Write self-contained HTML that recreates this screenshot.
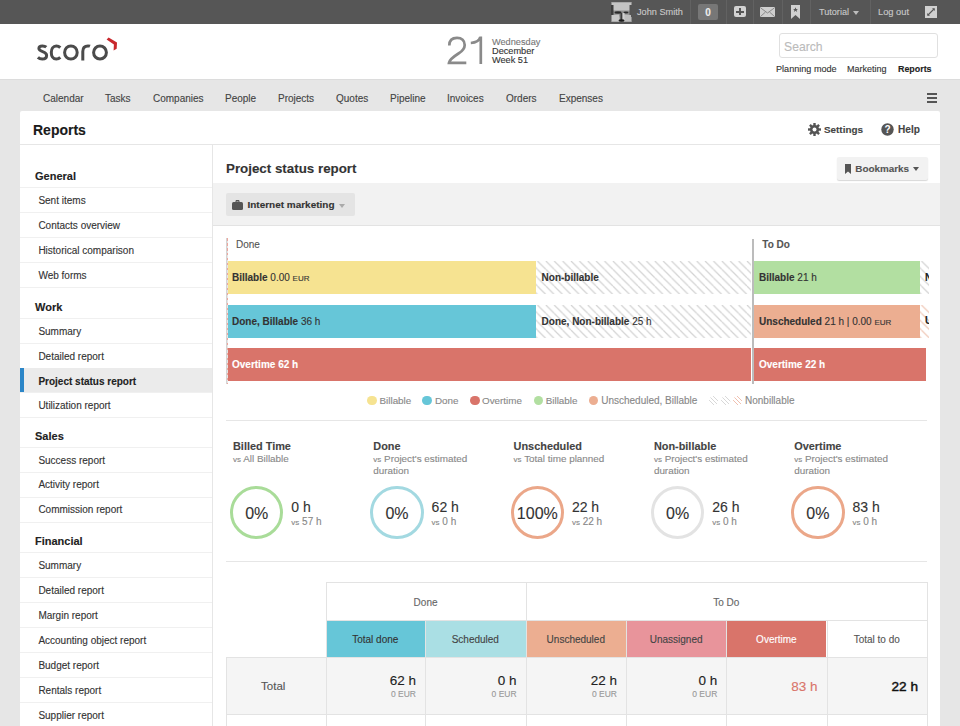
<!DOCTYPE html>
<html><head><meta charset="utf-8">
<style>
*{margin:0;padding:0;box-sizing:border-box}
html,body{width:960px;height:726px;overflow:hidden}
body{background:#e6e6e6;font-family:"Liberation Sans",sans-serif;position:relative;color:#333}
.a{position:absolute}
.t{position:absolute;line-height:1;white-space:nowrap;-webkit-text-stroke:0.12px currentColor}
.b{font-weight:bold}
#top{left:0;top:0;width:960px;height:24px;background:#565656}
#hdr{left:0;top:24px;width:960px;height:56px;background:#fff;border-bottom:1px solid #dcdcdc}
.sep{position:absolute;top:0;width:1px;height:24px;background:#626262}
.nav{font-size:10px;color:#444;top:94px}
#panel{left:20px;top:111px;width:920px;height:640px;background:#fff;border-radius:2px}
.hl{position:absolute;height:1px;background:#ebebeb}
.sh{font-size:11px;font-weight:bold;color:#222}
.si{font-size:10px;color:#333}
</style></head><body>
<!-- top bar -->
<div id="top" class="a">
  <svg class="a" style="left:611px;top:2px" width="21" height="20" viewBox="0 0 21 20"><defs><filter id="bl"><feGaussianBlur stdDeviation="0.6"/></filter></defs><rect width="21" height="20" fill="#8e8e8e"/><g filter="url(#bl)"><rect x="1" y="0.5" width="19" height="8" fill="#c4c4c4"/><rect x="0" y="3" width="2.5" height="10" fill="#3c3c3c"/><rect x="18.5" y="3" width="2.5" height="12" fill="#555"/><ellipse cx="7" cy="10.5" rx="3.5" ry="1.2" fill="#2c2c2c"/><ellipse cx="15" cy="10.5" rx="2.5" ry="1.1" fill="#2c2c2c"/><path d="M1 13 L8 12.5 L9 19.5 L1 19.5Z" fill="#c8c8c8"/><path d="M13 12.5 L20 13 L20 19.5 L13 19.5Z" fill="#bdbdbd"/><rect x="9.5" y="11" width="2" height="7" fill="#3a3a3a"/><rect x="11.5" y="11" width="2" height="7" fill="#d0d0d0"/><ellipse cx="10.5" cy="18.5" rx="3" ry="1.2" fill="#1e1e1e"/></g></svg>
  <div class="t" style="left:637px;top:8px;font-size:9.2px;color:#c9c9c9">John Smith</div>
  <div class="sep" style="left:690px"></div>
  <div class="a" style="left:698px;top:4px;width:20px;height:16px;background:#777;border-radius:2px"></div>
  <div class="t b" style="left:698px;top:7.5px;width:20px;text-align:center;font-size:10px;color:#eee">0</div>
  <div class="sep" style="left:726px"></div>
  <div class="a" style="left:734px;top:6px;width:12px;height:11px;background:#d2d2d2;border-radius:2px"></div>
  <div class="a" style="left:739px;top:8px;width:2px;height:7px;background:#565656"></div>
  <div class="a" style="left:736px;top:10.5px;width:8px;height:2px;background:#565656"></div>
  <div class="sep" style="left:753px"></div>
  <svg class="a" style="left:760px;top:7px" width="15" height="10" viewBox="0 0 15 10"><rect x="0" y="0" width="15" height="10" rx="1" fill="#cfcfcf"/><path d="M0.5 0.8 L7.5 6 L14.5 0.8 M0.5 9.5 L5.5 5 M14.5 9.5 L9.5 5" stroke="#8a8a8a" stroke-width="1" fill="none"/></svg>
  <div class="sep" style="left:782px"></div>
  <svg class="a" style="left:791px;top:5px" width="9" height="14" viewBox="0 0 9 14"><path d="M0 0 H9 V14 L4.5 10 L0 14 Z" fill="#d0d0d0"/><path d="M4.5 2.2 L5.2 4 L7 4 L5.6 5.1 L6.1 6.9 L4.5 5.8 L2.9 6.9 L3.4 5.1 L2 4 L3.8 4 Z" fill="#565656"/></svg>
  <div class="sep" style="left:810px"></div>
  <div class="t" style="left:819px;top:8px;font-size:9.1px;color:#c9c9c9">Tutorial</div>
  <svg class="a" style="left:853px;top:10.5px" width="6" height="4" viewBox="0 0 6 4"><path d="M0 0 H6 L3 4Z" fill="#bdbdbd"/></svg>
  <div class="sep" style="left:870px"></div>
  <div class="t" style="left:878px;top:8px;font-size:9.3px;color:#c9c9c9">Log out</div>
  <svg class="a" style="left:925px;top:6px" width="12" height="12" viewBox="0 0 12 12"><rect width="12" height="12" fill="#d0d0d0"/><path d="M3 9 L9 3" stroke="#565656" stroke-width="1.1"/><path d="M7 2.2 H9.8 V5Z M2.2 7 V9.8 H5Z" fill="#565656"/></svg>
</div>
<!-- header -->
<div id="hdr" class="a">
  <svg class="a" style="left:30px;top:0" width="130" height="55" viewBox="30 24 130 55">
    <g fill="none" stroke="#4b4b4b" stroke-width="3">
      <path d="M46.3 47.2 C45.2 46.2 43.9 45.9 42.5 45.9 C40.2 45.9 38.9 47.1 38.9 48.6 C38.9 50.3 40.6 51 42.6 51.7 C45 52.5 46.6 53.4 46.6 55.5 C46.6 57.7 44.8 59.1 42.3 59.1 C40.6 59.1 39.1 58.6 37.9 57.4"/>
      <path d="M60.3 47.6 C59.2 46.5 57.8 45.9 56.3 45.9 C53.1 45.9 51.3 48.9 51.3 52.5 C51.3 56.1 53.1 59.1 56.3 59.1 C57.8 59.1 59.2 58.5 60.3 57.4"/>
      <ellipse cx="70.9" cy="52.5" rx="6.3" ry="6.6"/>
      <path d="M82.8 60.6 V51.5 C82.8 47.8 84.8 45.9 88 45.9 C88.8 45.9 89.5 46 90 46.2"/>
      <ellipse cx="100" cy="52.5" rx="6.4" ry="6.6"/>
    </g>
    <path d="M106.6 39.6 L108.6 37.4 L117 42.4 L116.7 48.8 L113.6 50.6 L113.9 44.4 Z" fill="#c9282d"/>
  </svg>
  <svg class="a" style="left:440px;top:8px" width="50" height="40" viewBox="440 32 50 40"><g fill="none" stroke="#8a8a8a" stroke-width="2.7"><path d="M449.3 45.5 C449.3 40.3 452.3 37.8 457 37.8 C461.7 37.8 464.7 40.7 464.7 45 C464.7 48.8 462.3 51.2 458.5 53.5 C453 57 449.6 59.4 449 62.8 L466.3 62.8"/><path d="M470.8 43 C476 42.7 479.3 40.8 480.3 37.2 M480.8 36.5 V64"/></g></svg>
  <div class="t" style="left:492px;top:14px;font-size:9.2px;color:#777">Wednesday</div>
  <div class="t" style="left:492px;top:23px;font-size:9.2px;color:#333">December</div>
  <div class="t" style="left:492px;top:32px;font-size:9.2px;color:#333">Week 51</div>
  <div class="a" style="left:779px;top:9px;width:159px;height:25px;border:1px solid #e0e0e0;border-radius:3px;background:#fff"></div>
  <div class="t" style="left:784px;top:17px;font-size:12.2px;color:#bbb">Search</div>
  <div class="t" style="left:776px;top:41px;font-size:9.1px;color:#333">Planning mode</div>
  <div class="t" style="left:847px;top:41px;font-size:9px;color:#333">Marketing</div>
  <div class="t b" style="left:898px;top:41px;font-size:8.9px;color:#222">Reports</div>
</div>
<!-- nav -->
<div class="t nav" style="left:43px">Calendar</div>
<div class="t nav" style="left:105px">Tasks</div>
<div class="t nav" style="left:153px">Companies</div>
<div class="t nav" style="left:225px">People</div>
<div class="t nav" style="left:278px">Projects</div>
<div class="t nav" style="left:336px">Quotes</div>
<div class="t nav" style="left:390px">Pipeline</div>
<div class="t nav" style="left:447px">Invoices</div>
<div class="t nav" style="left:506px">Orders</div>
<div class="t nav" style="left:559px">Expenses</div>
<div class="a" style="left:927px;top:93px;width:10px;height:2px;background:#555"></div>
<div class="a" style="left:927px;top:97px;width:10px;height:2px;background:#555"></div>
<div class="a" style="left:927px;top:101px;width:10px;height:2px;background:#555"></div>
<!-- panel -->
<div id="panel" class="a"></div>
<!-- CONTENT -->
<div class="t b" style="left:33px;top:123.45px;font-size:14px;color:#1a1a1a;">Reports</div>
<svg class="a" style="left:808px;top:123px" width="13" height="13" viewBox="0 0 13 13"><g fill="#555"><circle cx="6.5" cy="6.5" r="4.6"/><rect x="5.3" y="0" width="2.4" height="13" transform="rotate(0 6.5 6.5)"/><rect x="5.3" y="0" width="2.4" height="13" transform="rotate(45 6.5 6.5)"/><rect x="5.3" y="0" width="2.4" height="13" transform="rotate(90 6.5 6.5)"/><rect x="5.3" y="0" width="2.4" height="13" transform="rotate(135 6.5 6.5)"/></g><circle cx="6.5" cy="6.5" r="2" fill="#fff"/></svg>
<div class="t b" style="left:824px;top:125.32px;font-size:9.9px;color:#444;">Settings</div>
<svg class="a" style="left:881px;top:123px" width="13" height="13" viewBox="0 0 13 13"><circle cx="6.5" cy="6.5" r="6.2" fill="#555"/><text x="6.5" y="10.2" text-anchor="middle" font-family="Liberation Sans" font-weight="bold" font-size="10" fill="#fff">?</text></svg>
<div class="t b" style="left:898px;top:125.15px;font-size:10.1px;color:#444;">Help</div>
<div class="a" style="left:20px;top:144px;width:920px;height:1px;background:#e6e6e6;"></div>
<div class="a" style="left:212px;top:145px;width:1px;height:600px;background:#e6e6e6;"></div>
<div class="t b" style="left:35px;top:170.79px;font-size:11px;color:#222;">General</div>
<div class="a" style="left:20px;top:187px;width:192px;height:1px;background:#f0f0f0;"></div>
<div class="t" style="left:38.4px;top:195.63px;font-size:10px;color:#333;">Sent items</div>
<div class="a" style="left:20px;top:212px;width:192px;height:1px;background:#f0f0f0;"></div>
<div class="t" style="left:38.4px;top:220.63px;font-size:10px;color:#333;">Contacts overview</div>
<div class="a" style="left:20px;top:237px;width:192px;height:1px;background:#f0f0f0;"></div>
<div class="t" style="left:38.4px;top:245.63px;font-size:10px;color:#333;">Historical comparison</div>
<div class="a" style="left:20px;top:262px;width:192px;height:1px;background:#f0f0f0;"></div>
<div class="t" style="left:38.4px;top:270.63px;font-size:10px;color:#333;">Web forms</div>
<div class="a" style="left:20px;top:287px;width:192px;height:1px;background:#f0f0f0;"></div>
<div class="t b" style="left:35px;top:301.79px;font-size:11px;color:#222;">Work</div>
<div class="a" style="left:20px;top:318px;width:192px;height:1px;background:#f0f0f0;"></div>
<div class="t" style="left:38.4px;top:326.63px;font-size:10px;color:#333;">Summary</div>
<div class="a" style="left:20px;top:343px;width:192px;height:1px;background:#f0f0f0;"></div>
<div class="t" style="left:38.4px;top:351.63px;font-size:10px;color:#333;">Detailed report</div>
<div class="a" style="left:20px;top:368px;width:192px;height:1px;background:#f0f0f0;"></div>
<div class="a" style="left:20px;top:368px;width:192px;height:24px;background:#ebebeb;"></div>
<div class="a" style="left:20px;top:368px;width:4px;height:24px;background:#2c86c8;"></div>
<div class="t b" style="left:38.4px;top:376.54px;font-size:10px;color:#222;">Project status report</div>
<div class="a" style="left:20px;top:392px;width:192px;height:1px;background:#f0f0f0;"></div>
<div class="t" style="left:38.4px;top:400.63px;font-size:10px;color:#333;">Utilization report</div>
<div class="a" style="left:20px;top:417px;width:192px;height:1px;background:#f0f0f0;"></div>
<div class="t b" style="left:35px;top:430.79px;font-size:11px;color:#222;">Sales</div>
<div class="a" style="left:20px;top:447px;width:192px;height:1px;background:#f0f0f0;"></div>
<div class="t" style="left:38.4px;top:455.63px;font-size:10px;color:#333;">Success report</div>
<div class="a" style="left:20px;top:471.5px;width:192px;height:1px;background:#f0f0f0;"></div>
<div class="t" style="left:38.4px;top:480.13px;font-size:10px;color:#333;">Activity report</div>
<div class="a" style="left:20px;top:496.5px;width:192px;height:1px;background:#f0f0f0;"></div>
<div class="t" style="left:38.4px;top:505.13px;font-size:10px;color:#333;">Commission report</div>
<div class="a" style="left:20px;top:522px;width:192px;height:1px;background:#f0f0f0;"></div>
<div class="t b" style="left:35px;top:535.79px;font-size:11px;color:#222;">Financial</div>
<div class="a" style="left:20px;top:552px;width:192px;height:1px;background:#f0f0f0;"></div>
<div class="t" style="left:38.4px;top:560.63px;font-size:10px;color:#333;">Summary</div>
<div class="a" style="left:20px;top:577px;width:192px;height:1px;background:#f0f0f0;"></div>
<div class="t" style="left:38.4px;top:585.63px;font-size:10px;color:#333;">Detailed report</div>
<div class="a" style="left:20px;top:602px;width:192px;height:1px;background:#f0f0f0;"></div>
<div class="t" style="left:38.4px;top:610.63px;font-size:10px;color:#333;">Margin report</div>
<div class="a" style="left:20px;top:627px;width:192px;height:1px;background:#f0f0f0;"></div>
<div class="t" style="left:38.4px;top:635.63px;font-size:10px;color:#333;">Accounting object report</div>
<div class="a" style="left:20px;top:652px;width:192px;height:1px;background:#f0f0f0;"></div>
<div class="t" style="left:38.4px;top:660.63px;font-size:10px;color:#333;">Budget report</div>
<div class="a" style="left:20px;top:677px;width:192px;height:1px;background:#f0f0f0;"></div>
<div class="t" style="left:38.4px;top:685.63px;font-size:10px;color:#333;">Rentals report</div>
<div class="a" style="left:20px;top:702px;width:192px;height:1px;background:#f0f0f0;"></div>
<div class="t" style="left:38.4px;top:710.63px;font-size:10px;color:#333;">Supplier report</div>
<div class="a" style="left:20px;top:727px;width:192px;height:1px;background:#f0f0f0;"></div>
<div class="t b" style="left:226px;top:162.40px;font-size:13.35px;color:#333;">Project status report</div>
<div class="a" style="left:837px;top:157px;width:91px;height:23px;background:#f2f2f2;border-radius:2px;box-shadow:0 1px 1px #d8d8d8"></div>
<svg class="a" style="left:845px;top:164px" width="7" height="10" viewBox="0 0 7 10"><path d="M0 0H6V10L3 7.5L0 10Z" fill="#555"/></svg>
<div class="t b" style="left:855.3px;top:164.32px;font-size:9.9px;color:#555;">Bookmarks</div>
<svg class="a" style="left:913px;top:167px" width="6" height="4" viewBox="0 0 6 4"><path d="M0 0H6L3 4Z" fill="#555"/></svg>
<div class="a" style="left:213px;top:182.5px;width:727px;height:1px;background:#e6e6e6;"></div>
<div class="a" style="left:213px;top:183px;width:727px;height:42px;background:#f2f2f2;"></div>
<div class="a" style="left:213px;top:225px;width:727px;height:1px;background:#e3e3e3;"></div>
<div class="a" style="left:226px;top:193px;width:129px;height:23px;background:#e4e4e4;border-radius:2px"></div>
<svg class="a" style="left:232px;top:200px" width="11" height="10" viewBox="0 0 11 10"><path d="M4 0.5H7V2H4Z" fill="none" stroke="#555" stroke-width="1"/><rect x="0" y="2" width="11" height="8" rx="1.5" fill="#555"/></svg>
<div class="t b" style="left:247.5px;top:200.26px;font-size:9.97px;color:#333;">Internet marketing</div>
<svg class="a" style="left:339px;top:204px" width="6" height="4" viewBox="0 0 6 4"><path d="M0 0H6L3 4Z" fill="#aaa"/></svg>
<svg width="0" height="0" style="position:absolute"><defs><pattern id="hp" width="8.38" height="8.38" patternUnits="userSpaceOnUse" patternTransform="translate(1.5,0)"><path d="M0 0L8.38 8.38M-8.38 0L0 8.38M0 -8.38L8.38 0" stroke="#d3d3d3" stroke-width="1.25"/></pattern><pattern id="hpp" width="8.38" height="8.38" patternUnits="userSpaceOnUse" patternTransform="translate(1.5,0)"><path d="M0 0L8.38 8.38M-8.38 0L0 8.38M0 -8.38L8.38 0" stroke="#f0c9b8" stroke-width="1.25"/></pattern><pattern id="hps" width="4" height="4" patternUnits="userSpaceOnUse"><path d="M0 0L4 4M-4 0L0 4M0 -4L4 0" stroke="#d8d8d8" stroke-width="1"/></pattern><pattern id="hpsp" width="4" height="4" patternUnits="userSpaceOnUse"><path d="M0 0L4 4M-4 0L0 4M0 -4L4 0" stroke="#f0c0b0" stroke-width="1"/></pattern></defs></svg>
<div class="a" style="left:226px;top:238px;width:1px;height:146px;background:#d4d4d4"></div>
<div class="a" style="left:227px;top:238px;width:1px;height:146px;background:repeating-linear-gradient(180deg,#eea69d 0,#eea69d 2.5px,#e6e6e6 2.5px,#e6e6e6 5px)"></div>
<div class="a" style="left:752px;top:239px;width:1.5px;height:145px;background:#bcbcbc;"></div>
<div class="t" style="left:236px;top:239.73px;font-size:10px;color:#555;">Done</div>
<div class="t b" style="left:762.3px;top:239.73px;font-size:10px;color:#555;">To Do</div>
<div class="a" style="left:228px;top:261px;width:308px;height:33px;background:#f6e391;"></div>
<svg class="a" style="left:536px;top:261px" width="215" height="33"><rect width="215" height="33" fill="#fff"/><rect width="215" height="33" fill="url(#hp)"/></svg>
<div class="a" style="left:754px;top:261px;width:166px;height:33px;background:#b2dfa1;"></div>
<svg class="a" style="left:920px;top:261px" width="9" height="33"><rect width="9" height="33" fill="#fff"/><rect width="9" height="33" fill="url(#hp)"/></svg>
<div class="t" style="left:232px;top:273.24px;font-size:10px;color:#333;"><b>Billable</b> 0.00 <span style="font-size:8px">EUR</span></div>
<div class="t" style="left:541.6px;top:273.24px;font-size:10px;color:#333;"><b>Non-billable</b></div>
<div class="t" style="left:759px;top:273.24px;font-size:10px;color:#333;"><b>Billable</b> 21 h</div>
<div class="a" style="left:920px;top:261px;width:9px;height:33px;overflow:hidden"><div class="t" style="left:5px;top:11.73px;font-size:10px;color:#222;"><b>Non-billable</b></div>
</div>
<div class="a" style="left:228px;top:304.5px;width:308px;height:33px;background:#66c6d8;"></div>
<svg class="a" style="left:536px;top:304.5px" width="215" height="33"><rect width="215" height="33" fill="#fff"/><rect width="215" height="33" fill="url(#hp)"/></svg>
<div class="a" style="left:754px;top:304.5px;width:166px;height:33px;background:#ecae91;"></div>
<svg class="a" style="left:920px;top:304.5px" width="9" height="33"><rect width="9" height="33" fill="#fff"/><rect width="9" height="33" fill="url(#hpp)"/></svg>
<div class="t" style="left:232px;top:316.74px;font-size:10px;color:#333;"><b>Done, Billable</b> 36 h</div>
<div class="t" style="left:541.6px;top:316.74px;font-size:10px;color:#333;"><b>Done, Non-billable</b> 25 h</div>
<div class="t" style="left:759px;top:316.74px;font-size:10px;color:#333;"><b>Unscheduled</b> 21 h | 0.00 <span style="font-size:8px">EUR</span></div>
<div class="a" style="left:920px;top:304.5px;width:9px;height:33px;overflow:hidden"><div class="t" style="left:5px;top:11.73px;font-size:10px;color:#222;"><b>Unscheduled</b></div>
</div>
<div class="a" style="left:228px;top:348px;width:523px;height:33px;background:#d9746a;"></div>
<div class="a" style="left:754px;top:348px;width:172px;height:33px;background:#d9746a;"></div>
<div class="t" style="left:232px;top:360.24px;font-size:10px;color:#fff;"><b>Overtime 62 h</b></div>
<div class="t" style="left:759px;top:360.24px;font-size:10px;color:#fff;"><b>Overtime 22 h</b></div>
<div class="a" style="left:367px;top:395.5px;width:9.5px;height:9.5px;border-radius:50%;background:#f6e391"></div>
<div class="t" style="left:379.5px;top:396.11px;font-size:9.85px;color:#888;">Billable</div>
<div class="a" style="left:422px;top:395.5px;width:9.5px;height:9.5px;border-radius:50%;background:#66c6d8"></div>
<div class="t" style="left:435px;top:396.11px;font-size:9.85px;color:#888;">Done</div>
<div class="a" style="left:470px;top:395.5px;width:9.5px;height:9.5px;border-radius:50%;background:#d9746a"></div>
<div class="t" style="left:482px;top:396.11px;font-size:9.85px;color:#888;">Overtime</div>
<div class="a" style="left:533.7px;top:395.5px;width:9.5px;height:9.5px;border-radius:50%;background:#b2dfa1"></div>
<div class="t" style="left:545.7px;top:396.11px;font-size:9.85px;color:#888;">Billable</div>
<div class="a" style="left:588.7px;top:395.5px;width:9.5px;height:9.5px;border-radius:50%;background:#ecae91"></div>
<div class="t" style="left:601.2px;top:395.99px;font-size:10px;color:#888;">Unscheduled, Billable</div>
<svg class="a" style="left:708.7px;top:395.5px" width="9.5" height="9.5"><circle cx="4.75" cy="4.75" r="4.75" fill="url(#hps)"/></svg>
<svg class="a" style="left:721.2px;top:395.5px" width="9.5" height="9.5"><circle cx="4.75" cy="4.75" r="4.75" fill="url(#hps)"/></svg>
<svg class="a" style="left:732.5px;top:395.5px" width="9.5" height="9.5"><circle cx="4.75" cy="4.75" r="4.75" fill="url(#hpsp)"/></svg>
<div class="t" style="left:745px;top:395.99px;font-size:10px;color:#888;">Nonbillable</div>
<div class="a" style="left:226px;top:420px;width:701px;height:1px;background:#e6e6e6;"></div>
<div class="t b" style="left:233.0px;top:441.27px;font-size:10.9px;color:#444;">Billed Time</div>
<div class="t" style="left:233.0px;top:454.12px;font-size:9.9px;color:#888;"><span style="font-size:8px">vs</span> All Billable</div>
<div class="a" style="left:230.05px;top:485.85px;width:53.3px;height:53.3px;border-radius:50%;border:3px solid #a9dc99"></div>
<div class="t" style="left:226.7px;width:60.0px;text-align:center;top:505.96px;font-size:16px;color:#333;">0%</div>
<div class="t" style="left:291.3px;top:499.75px;font-size:14px;color:#333;">0 h</div>
<div class="t" style="left:291.3px;top:517.24px;font-size:10px;color:#888;"><span style="font-size:8px">vs</span> 57 h</div>
<div class="t b" style="left:373.3px;top:441.27px;font-size:10.9px;color:#444;">Done</div>
<div class="t" style="left:373.3px;top:454.12px;font-size:9.9px;color:#888;"><span style="font-size:8px">vs</span> Project's estimated</div>
<div class="t" style="left:373.3px;top:466.12px;font-size:9.9px;color:#888;">duration</div>
<div class="a" style="left:370.35px;top:485.85px;width:53.3px;height:53.3px;border-radius:50%;border:3px solid #a3d9e1"></div>
<div class="t" style="left:367.0px;width:60.0px;text-align:center;top:505.96px;font-size:16px;color:#333;">0%</div>
<div class="t" style="left:431.6px;top:499.75px;font-size:14px;color:#333;">62 h</div>
<div class="t" style="left:431.6px;top:517.24px;font-size:10px;color:#888;"><span style="font-size:8px">vs</span> 0 h</div>
<div class="t b" style="left:513.6px;top:441.27px;font-size:10.9px;color:#444;">Unscheduled</div>
<div class="t" style="left:513.6px;top:454.12px;font-size:9.9px;color:#888;"><span style="font-size:8px">vs</span> Total time planned</div>
<div class="a" style="left:510.65px;top:485.85px;width:53.3px;height:53.3px;border-radius:50%;border:3px solid #eba789"></div>
<div class="t" style="left:507.30000000000007px;width:60.0px;text-align:center;top:505.96px;font-size:16px;color:#333;">100%</div>
<div class="t" style="left:571.9px;top:499.75px;font-size:14px;color:#333;">22 h</div>
<div class="t" style="left:571.9px;top:517.24px;font-size:10px;color:#888;"><span style="font-size:8px">vs</span> 22 h</div>
<div class="t b" style="left:653.9000000000001px;top:441.27px;font-size:10.9px;color:#444;">Non-billable</div>
<div class="t" style="left:653.9000000000001px;top:454.12px;font-size:9.9px;color:#888;"><span style="font-size:8px">vs</span> Project's estimated</div>
<div class="t" style="left:653.9000000000001px;top:466.12px;font-size:9.9px;color:#888;">duration</div>
<div class="a" style="left:650.95px;top:485.85px;width:53.3px;height:53.3px;border-radius:50%;border:3px solid #e3e3e3"></div>
<div class="t" style="left:647.6000000000001px;width:60.0px;text-align:center;top:505.96px;font-size:16px;color:#333;">0%</div>
<div class="t" style="left:712.2px;top:499.75px;font-size:14px;color:#333;">26 h</div>
<div class="t" style="left:712.2px;top:517.24px;font-size:10px;color:#888;"><span style="font-size:8px">vs</span> 0 h</div>
<div class="t b" style="left:794.2px;top:441.27px;font-size:10.9px;color:#444;">Overtime</div>
<div class="t" style="left:794.2px;top:454.12px;font-size:9.9px;color:#888;"><span style="font-size:8px">vs</span> Project's estimated</div>
<div class="t" style="left:794.2px;top:466.12px;font-size:9.9px;color:#888;">duration</div>
<div class="a" style="left:791.25px;top:485.85px;width:53.3px;height:53.3px;border-radius:50%;border:3px solid #eba789"></div>
<div class="t" style="left:787.9000000000001px;width:60.0px;text-align:center;top:505.96px;font-size:16px;color:#333;">0%</div>
<div class="t" style="left:852.5px;top:499.75px;font-size:14px;color:#333;">83 h</div>
<div class="t" style="left:852.5px;top:517.24px;font-size:10px;color:#888;"><span style="font-size:8px">vs</span> 0 h</div>
<div class="a" style="left:226px;top:561px;width:701px;height:1px;background:#e6e6e6;"></div>
<div class="a" style="left:325.5px;top:582px;width:601.5px;height:1px;background:#e3e3e3;"></div>
<div class="a" style="left:325.5px;top:620px;width:601.5px;height:1px;background:#e3e3e3;"></div>
<div class="t" style="left:325.5px;width:200.10000000000002px;text-align:center;top:597.74px;font-size:10px;color:#666;">Done</div>
<div class="t" style="left:525.6px;width:401.4px;text-align:center;top:597.74px;font-size:10px;color:#666;">To Do</div>
<div class="a" style="left:325.5px;top:620.5px;width:99.5px;height:37px;background:#66c6d8;"></div>
<div class="t" style="left:325.5px;width:99.5px;text-align:center;top:635.24px;font-size:10px;color:#333;">Total done</div>
<div class="a" style="left:425px;top:620.5px;width:100.60000000000002px;height:37px;background:#aadfe4;"></div>
<div class="t" style="left:425px;width:100.60000000000002px;text-align:center;top:635.24px;font-size:10px;color:#444;">Scheduled</div>
<div class="a" style="left:525.6px;top:620.5px;width:100.39999999999998px;height:37px;background:#ecae91;"></div>
<div class="t" style="left:525.6px;width:100.39999999999998px;text-align:center;top:635.24px;font-size:10px;color:#444;">Unscheduled</div>
<div class="a" style="left:626px;top:620.5px;width:100.29999999999995px;height:37px;background:#e8949b;"></div>
<div class="t" style="left:626px;width:100.29999999999995px;text-align:center;top:635.24px;font-size:10px;color:#444;">Unassigned</div>
<div class="a" style="left:726.3px;top:620.5px;width:100.20000000000005px;height:37px;background:#d9746a;"></div>
<div class="t" style="left:726.3px;width:100.20000000000005px;text-align:center;top:635.24px;font-size:10px;color:#fff;">Overtime</div>
<div class="a" style="left:826.5px;top:620.5px;width:100.5px;height:37px;background:#fff;"></div>
<div class="t" style="left:826.5px;width:100.5px;text-align:center;top:635.24px;font-size:10px;color:#555;">Total to do</div>
<div class="a" style="left:226px;top:657.5px;width:701px;height:57px;background:#f5f5f5;"></div>
<div class="a" style="left:226px;top:657px;width:701px;height:1px;background:#e3e3e3;"></div>
<div class="a" style="left:226px;top:714px;width:701px;height:1px;background:#e3e3e3;"></div>
<div class="t" style="left:223.5px;width:99.5px;text-align:center;top:681.47px;font-size:11.5px;color:#555;">Total</div>
<div class="t" style="right:544px;top:674.17px;font-size:13.5px;color:#222;text-align:right;">62 h</div>
<div class="t" style="right:544px;top:689.75px;font-size:8.5px;color:#999;text-align:right;">0 EUR</div>
<div class="t" style="right:443.4px;top:674.17px;font-size:13.5px;color:#222;text-align:right;">0 h</div>
<div class="t" style="right:443.4px;top:689.75px;font-size:8.5px;color:#999;text-align:right;">0 EUR</div>
<div class="t" style="right:343px;top:674.17px;font-size:13.5px;color:#222;text-align:right;">22 h</div>
<div class="t" style="right:343px;top:689.75px;font-size:8.5px;color:#999;text-align:right;">0 EUR</div>
<div class="t" style="right:242.70000000000005px;top:674.17px;font-size:13.5px;color:#222;text-align:right;">0 h</div>
<div class="t" style="right:242.70000000000005px;top:689.75px;font-size:8.5px;color:#999;text-align:right;">0 EUR</div>
<div class="t" style="right:142.5px;top:679.77px;font-size:13.5px;color:#d9746a;text-align:right;">83 h</div>
<div class="t" style="right:42px;top:679.69px;font-size:13.6px;color:#111;text-align:right;-webkit-text-stroke:0.45px #111;">22 h</div>
<div class="a" style="left:226px;top:657px;width:1px;height:80px;background:#e3e3e3;"></div>
<div class="a" style="left:325.5px;top:582px;width:1px;height:155px;background:#e3e3e3;"></div>
<div class="a" style="left:425px;top:620px;width:1px;height:117px;background:#e3e3e3;"></div>
<div class="a" style="left:525.6px;top:582px;width:1px;height:155px;background:#e3e3e3;"></div>
<div class="a" style="left:626px;top:620px;width:1px;height:117px;background:#e3e3e3;"></div>
<div class="a" style="left:726.3px;top:620px;width:1px;height:117px;background:#e3e3e3;"></div>
<div class="a" style="left:826.5px;top:620px;width:1px;height:117px;background:#e3e3e3;"></div>
<div class="a" style="left:927px;top:582px;width:1px;height:155px;background:#e3e3e3;"></div>
<!-- /CONTENT -->
</body></html>
